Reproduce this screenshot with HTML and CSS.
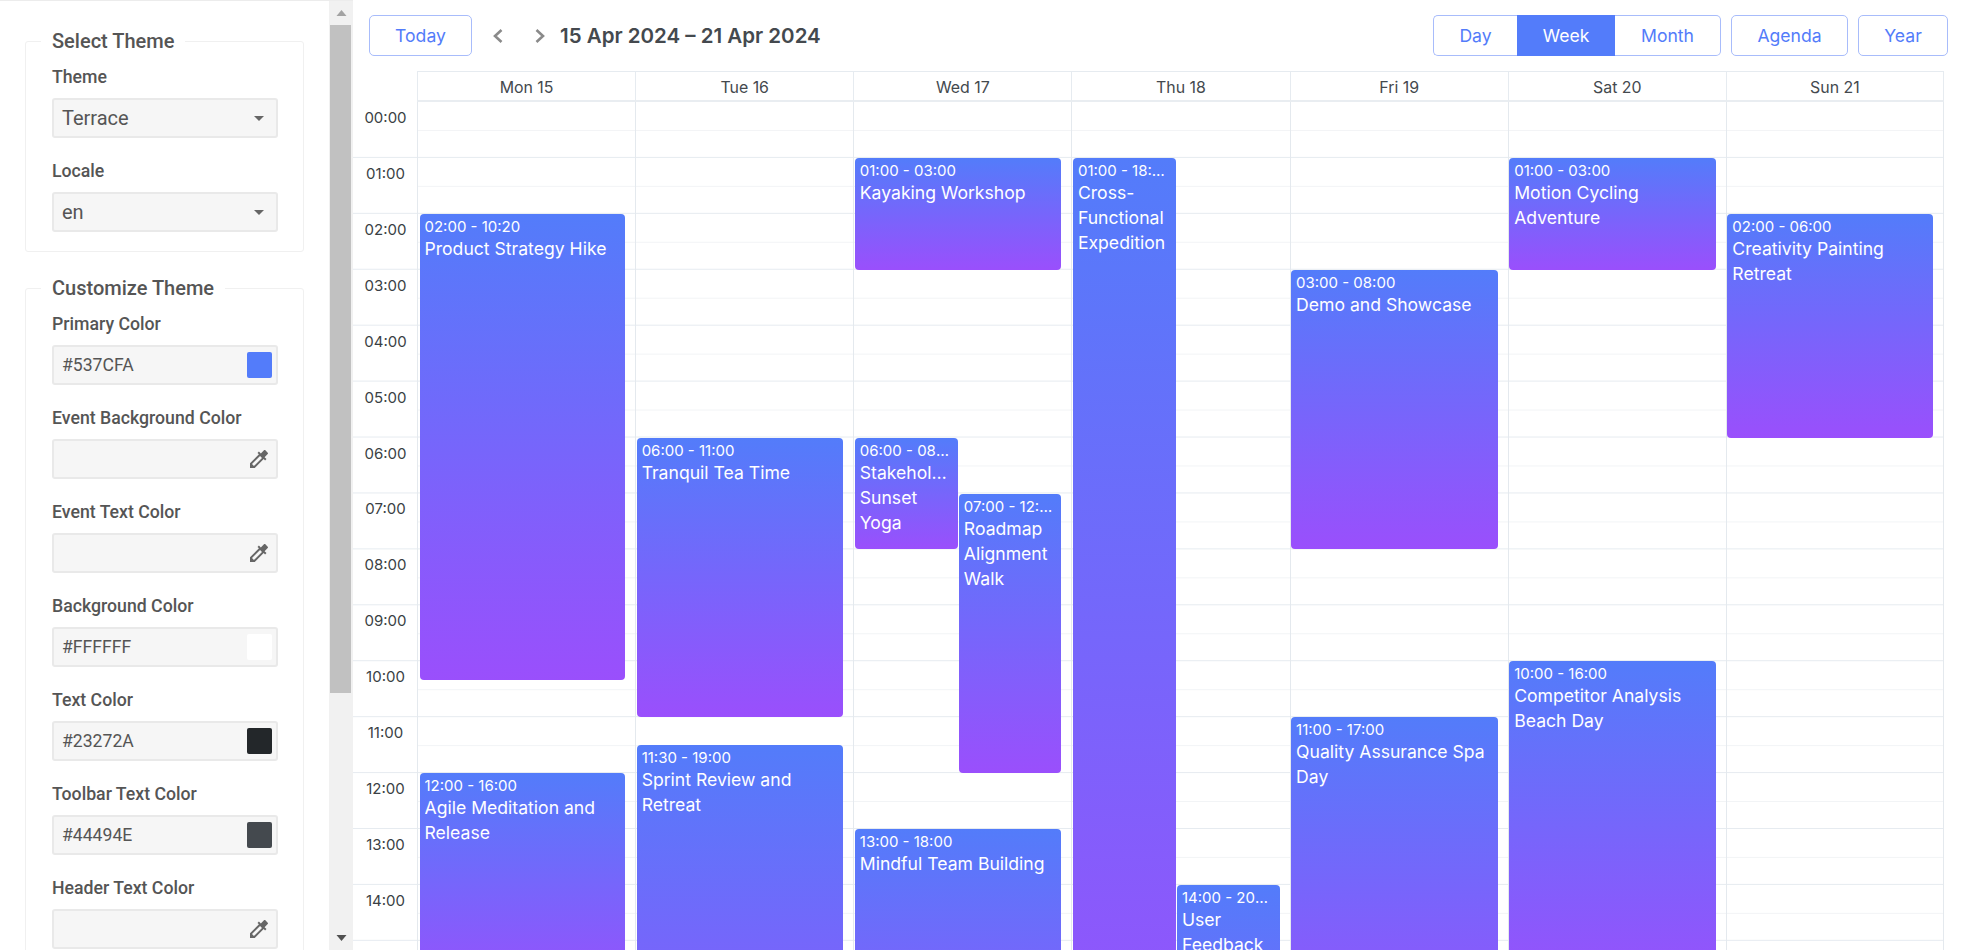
FILE: index.html
```html
<!DOCTYPE html>
<html lang="en">
<head>
<meta charset="utf-8">
<title>Scheduler theme</title>
<link rel="stylesheet" href="styles.css">
</head>
<body>
<div class="app">
  <aside class="sidebar">
    <div class="panel">
      <fieldset class="group">
        <legend>Select Theme</legend>
        <div class="field">
          <label>Theme</label>
          <div class="input"><span>Terrace</span><svg class="caret" viewBox="0 0 10 5"><path d="M0 0h10L5 5z"/></svg></div>
        </div>
        <div class="field last">
          <label>Locale</label>
          <div class="input"><span>en</span><svg class="caret" viewBox="0 0 10 5"><path d="M0 0h10L5 5z"/></svg></div>
        </div>
      </fieldset>
      <fieldset class="group">
        <legend>Customize Theme</legend>
        <div class="field">
          <label>Primary Color</label>
          <div class="input mono"><span>#537CFA</span><i class="swatch primary"></i></div>
        </div>
        <div class="field">
          <label>Event Background Color</label>
          <div class="input"><span></span><svg class="dropper" viewBox="0 0 24 24"><path d="M20.71 5.63l-2.34-2.34c-.39-.39-1.02-.39-1.41 0l-3.12 3.12-1.93-1.91-1.41 1.41 1.42 1.42L3 16.25V21h4.75l8.92-8.92 1.42 1.42 1.41-1.41-1.92-1.92 3.12-3.12c.4-.4.4-1.03.01-1.42zM6.92 19L5 17.08l8.06-8.06 1.92 1.92L6.92 19z"/></svg></div>
        </div>
        <div class="field">
          <label>Event Text Color</label>
          <div class="input"><span></span><svg class="dropper" viewBox="0 0 24 24"><path d="M20.71 5.63l-2.34-2.34c-.39-.39-1.02-.39-1.41 0l-3.12 3.12-1.93-1.91-1.41 1.41 1.42 1.42L3 16.25V21h4.75l8.92-8.92 1.42 1.42 1.41-1.41-1.92-1.92 3.12-3.12c.4-.4.4-1.03.01-1.42zM6.92 19L5 17.08l8.06-8.06 1.92 1.92L6.92 19z"/></svg></div>
        </div>
        <div class="field">
          <label>Background Color</label>
          <div class="input mono"><span>#FFFFFF</span><i class="swatch white"></i></div>
        </div>
        <div class="field">
          <label>Text Color</label>
          <div class="input mono"><span>#23272A</span><i class="swatch dark"></i></div>
        </div>
        <div class="field">
          <label>Toolbar Text Color</label>
          <div class="input mono"><span>#44494E</span><i class="swatch slate"></i></div>
        </div>
        <div class="field">
          <label>Header Text Color</label>
          <div class="input"><span></span><svg class="dropper" viewBox="0 0 24 24"><path d="M20.71 5.63l-2.34-2.34c-.39-.39-1.02-.39-1.41 0l-3.12 3.12-1.93-1.91-1.41 1.41 1.42 1.42L3 16.25V21h4.75l8.92-8.92 1.42 1.42 1.41-1.41-1.92-1.92 3.12-3.12c.4-.4.4-1.03.01-1.42zM6.92 19L5 17.08l8.06-8.06 1.92 1.92L6.92 19z"/></svg></div>
        </div>
      </fieldset>
    </div>
    <div class="scrollbar">
      <div class="sb-btn"><svg viewBox="0 0 10 6"><path d="M5 0l5 6H0z"/></svg></div>
      <div class="sb-track"><div class="sb-thumb"></div></div>
      <div class="sb-btn down"><svg viewBox="0 0 10 6"><path d="M0 0h10L5 6z"/></svg></div>
    </div>
  </aside>

  <main class="calendar">
    <header class="toolbar">
      <div class="tb-left">
        <button class="btn today">Today</button>
        <button class="nav" aria-label="Previous"><svg viewBox="0 0 12 16"><path d="M9.5 2L3 8l6.5 6"/></svg></button>
        <button class="nav next" aria-label="Next"><svg viewBox="0 0 12 16"><path d="M2.5 2L9 8l-6.5 6"/></svg></button>
        <h1 class="range">15 Apr 2024 – 21 Apr 2024</h1>
      </div>
      <div class="tb-right">
        <div class="btn-group">
          <button class="btn seg day-btn">Day</button>
          <button class="btn seg active week-btn">Week</button>
          <button class="btn seg month-btn">Month</button>
        </div>
        <button class="btn agenda-btn">Agenda</button>
        <button class="btn year-btn">Year</button>
      </div>
    </header>

    <div class="head-row">
      <div class="gutter"></div>
      <div class="head-cell">Mon 15</div>
      <div class="head-cell">Tue 16</div>
      <div class="head-cell">Wed 17</div>
      <div class="head-cell">Thu 18</div>
      <div class="head-cell">Fri 19</div>
      <div class="head-cell">Sat 20</div>
      <div class="head-cell">Sun 21</div>
    </div>

    <div class="grid">
      <div class="times">
        <div class="time">00:00</div><div class="time">01:00</div><div class="time">02:00</div><div class="time">03:00</div>
        <div class="time">04:00</div><div class="time">05:00</div><div class="time">06:00</div><div class="time">07:00</div>
        <div class="time">08:00</div><div class="time">09:00</div><div class="time">10:00</div><div class="time">11:00</div>
        <div class="time">12:00</div><div class="time">13:00</div><div class="time">14:00</div><div class="time">15:00</div>
      </div>

      <div class="day first">
        <article class="event" style="--start:2;--len:8.33"><p class="when">02:00 - 10:20</p><p class="what">Product Strategy Hike</p></article>
        <article class="event" style="--start:12;--len:4"><p class="when">12:00 - 16:00</p><p class="what">Agile Meditation and Release</p></article>
      </div>
      <div class="day">
        <article class="event" style="--start:6;--len:5"><p class="when">06:00 - 11:00</p><p class="what">Tranquil Tea Time</p></article>
        <article class="event" style="--start:11.5;--len:7.5"><p class="when">11:30 - 19:00</p><p class="what">Sprint Review and Retreat</p></article>
      </div>
      <div class="day">
        <article class="event" style="--start:1;--len:2"><p class="when">01:00 - 03:00</p><p class="what">Kayaking Workshop</p></article>
        <article class="event half-l" style="--start:6;--len:2"><p class="when">06:00 - 08:00</p><p class="what">Stakeholder Sunset Yoga</p></article>
        <article class="event half-r" style="--start:7;--len:5"><p class="when">07:00 - 12:00</p><p class="what">Roadmap Alignment Walk</p></article>
        <article class="event" style="--start:13;--len:5"><p class="when">13:00 - 18:00</p><p class="what">Mindful Team Building</p></article>
      </div>
      <div class="day">
        <article class="event half-l" style="--start:1;--len:17.5"><p class="when">01:00 - 18:30</p><p class="what">Cross-Functional Expedition</p></article>
        <article class="event half-r" style="--start:14;--len:6"><p class="when">14:00 - 20:00</p><p class="what">User Feedback</p></article>
      </div>
      <div class="day">
        <article class="event" style="--start:3;--len:5"><p class="when">03:00 - 08:00</p><p class="what">Demo and Showcase</p></article>
        <article class="event" style="--start:11;--len:6"><p class="when">11:00 - 17:00</p><p class="what">Quality Assurance Spa Day</p></article>
      </div>
      <div class="day">
        <article class="event" style="--start:1;--len:2"><p class="when">01:00 - 03:00</p><p class="what">Motion Cycling Adventure</p></article>
        <article class="event" style="--start:10;--len:6"><p class="when">10:00 - 16:00</p><p class="what">Competitor Analysis Beach Day</p></article>
      </div>
      <div class="day">
        <article class="event" style="--start:2;--len:4"><p class="when">02:00 - 06:00</p><p class="what">Creativity Painting Retreat</p></article>
      </div>
    </div>
  </main>
</div>
</body>
</html>
```
FILE: styles.css
```css
* { box-sizing: border-box; }
html, body { margin: 0; height: 950px; overflow: hidden; background: #fff; }
.app { display: flex; height: 950px; }

/* Sidebar */
.sidebar { display: flex; width: 353px; flex: none; height: 950px; border-top: 1px solid #ececec; font-family: Roboto, "Liberation Sans", sans-serif; color: #555; }
.panel { width: 329px; flex: none; padding: 28px 0 0 25px; overflow: hidden; }
.group { width: 279px; margin: 0 0 24px; padding: 14px 25px 19px 26px; border: 1px solid #f0f0f0; border-radius: 3px; min-width: 0; }
.group legend { padding: 0 11px; margin-left: -11px; font-size: 20px; font-weight: 500; line-height: 24px; color: #555; }
.field { margin-bottom: 23px; }
.field.last { margin-bottom: 0; }
.field label { display: block; height: 20px; margin-bottom: 11px; font-size: 17.7px; line-height: 20px; font-weight: 500; color: #555; }
.input { display: flex; align-items: center; justify-content: space-between; height: 40px; padding: 0 4px 0 8px; background: #f6f6f6; border: 2px solid #e9e9e9; border-radius: 3px; font-size: 20px; color: #555; }
.input.mono { font-size: 17.6px; }
.caret { width: 10px; height: 5px; margin-right: 8px; fill: #666; }
.dropper { width: 24px; height: 24px; margin-right: 1px; fill: #666; }
.swatch { display: block; width: 25px; height: 26px; border-radius: 2px; }
.swatch.primary { background: #537cfa; }
.swatch.white { background: #fff; }
.swatch.dark { background: #23272a; }
.swatch.slate { background: #44494e; }

.scrollbar { width: 24px; flex: none; display: flex; flex-direction: column; background: #f1f1f1; }
.sb-btn { height: 24px; flex: none; display: flex; align-items: center; justify-content: center; }
.sb-btn svg { width: 11px; height: 6px; fill: #a3a3a3; }
.sb-btn.down svg { fill: #505050; }
.sb-track { flex: 1; padding: 0 2px 0 1px; }
.sb-thumb { height: 668px; background: #c1c1c1; }

/* Calendar */
.calendar { flex: 1; min-width: 0; padding-top: 15px; font-family: Inter, "Liberation Sans", sans-serif; color: #23272a; overflow: hidden; }
.toolbar { display: flex; justify-content: space-between; align-items: center; height: 41px; padding: 0 20px 0 16px; }
.tb-left, .tb-right { display: flex; align-items: center; }
.btn { height: 41px; padding: 0; background: #fff; border: 1.5px solid #a8bcfb; border-radius: 5px; color: #537cfa; font: 400 17.6px Inter, "Liberation Sans", sans-serif; }
.today { width: 103px; margin-right: 6px; }
.nav { width: 40px; height: 32px; padding: 0; border: 0; background: none; display: flex; align-items: center; justify-content: center; }
.nav.next { margin-left: 2px; }
.nav svg { width: 12px; height: 16px; fill: none; stroke: #8a8a8a; stroke-width: 2.6; }
.range { margin: 0; font-size: 20.5px; font-weight: 600; color: #44494e; }
.btn-group { display: flex; margin-right: 10px; }
.seg { border-radius: 0; border-left-width: 0; border-right-width: 0; }
.day-btn { width: 84px; border-left-width: 1.5px; border-radius: 5px 0 0 5px; }
.week-btn { width: 98px; }
.month-btn { width: 106px; border-right-width: 1.5px; border-radius: 0 5px 5px 0; }
.seg.active { background: #537cfa; border-color: #537cfa; color: #fff; }
.agenda-btn { width: 117px; margin-right: 10px; }
.year-btn { width: 90px; }

.head-row { display: grid; grid-template-columns: 64px repeat(7, 1fr); height: 31px; margin: 15px 24px 0 0; font-size: 15.9px; }
.head-cell { display: flex; align-items: center; justify-content: center; padding-top: 2px; color: #44494e; border-top: 1px solid #e6ebf0; border-left: 1px solid #e6ebf0; border-bottom: 2px solid #e9edf1; }
.head-cell:last-child { border-right: 1px solid #e6ebf0; }

.grid { --hour: 55.93px; display: grid; grid-template-columns: 64px repeat(7, 1fr); height: 896px; margin-right: 24px; overflow: hidden; }
.times { background-image: linear-gradient(to bottom, transparent calc(var(--hour) - 1px), #e6ebf0 calc(var(--hour) - 1px)); background-size: 100% var(--hour); }
.time { height: var(--hour); padding: 4px 0 0 1px; text-align: center; font-size: 15px; line-height: 24px; color: #3a3f44; }
.day { position: relative; border-left: 1px solid #e4e9ee; background-image: linear-gradient(to bottom, transparent calc(var(--hour) - 1px), #e6ebf0 calc(var(--hour) - 1px)), linear-gradient(to bottom, transparent 28px, #f2f4f6 28px, #f2f4f6 29px, transparent 29px); background-size: 100% var(--hour); }
.day:last-child { border-right: 1px solid #e4e9ee; }

.event { position: absolute; top: calc(var(--start) * var(--hour)); height: calc(var(--len) * var(--hour)); left: .5px; right: 10px; padding: 3px 8px 3px 5px; overflow: hidden; border-radius: 4px; background: linear-gradient(to bottom, #537cfa, #9a4ffc); color: #fff; }
.day.first .event { left: 1.5px; }
.event.half-l { right: calc(50% + 5px); }
.event.half-r { left: calc(50% - 4px); }
.event p { margin: 0; overflow: hidden; text-overflow: ellipsis; }
.when { font-size: 15px; line-height: 19px; white-space: nowrap; }
.what { font-size: 17.6px; line-height: 25px; }
```
